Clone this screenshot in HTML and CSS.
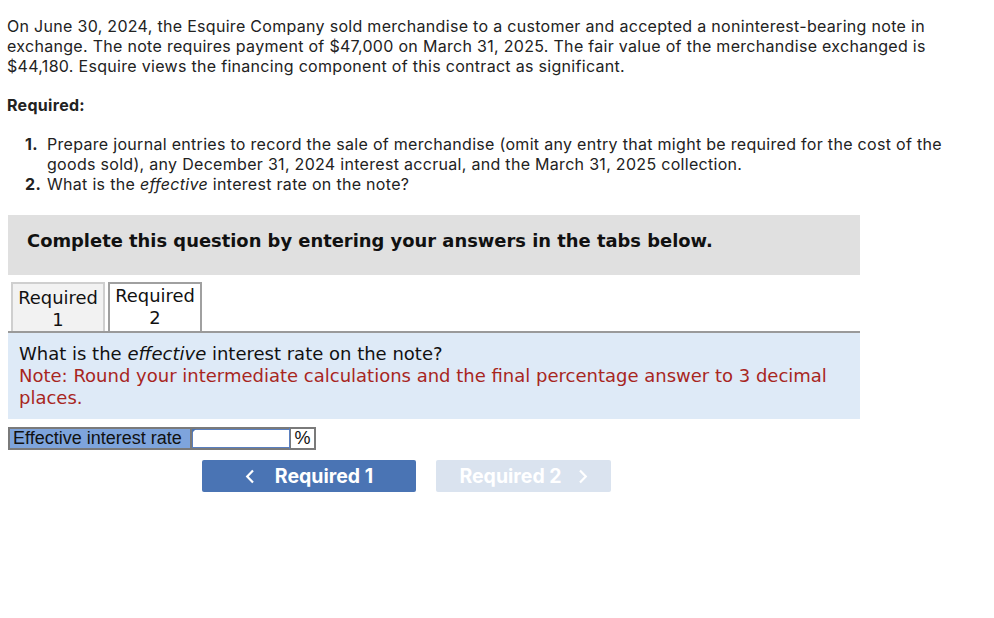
FILE: index.html
```html
<!DOCTYPE html>
<html>
<head>
<meta charset="utf-8">
<link rel="stylesheet" href="styles.css">
</head>
<body>
<div class="page">
  <p class="intro">On June 30, 2024, the Esquire Company sold merchandise to a customer and accepted a noninterest-bearing note in exchange. The note requires payment of $47,000 on March 31, 2025. The fair value of the merchandise exchanged is $44,180. Esquire views the financing component of this contract as significant.</p>
  <p class="req-title">Required:</p>
  <ol class="req-list">
    <li><span class="num">1.</span><span>Prepare journal entries to record the sale of merchandise (omit any entry that might be required for the cost of the goods sold), any December 31, 2024 interest accrual, and the March 31, 2025 collection.</span></li>
    <li><span class="num">2.</span><span>What is the <em>effective</em> interest rate on the note?</span></li>
  </ol>

  <div class="instructions">Complete this question by entering your answers in the tabs below.</div>

  <div class="tabs">
    <div class="tab tab-inactive">Required<br>1</div>
    <div class="tab tab-active">Required<br>2</div>
  </div>

  <div class="panel">
    <div class="question">What is the <em>effective</em> interest rate on the note?</div>
    <div class="note">Note: Round your intermediate calculations and the final percentage answer to 3 decimal places.</div>
  </div>

  <div class="answer-row">
    <div class="answer-label">Effective interest rate</div>
    <div class="answer-input"><span class="corner"></span></div>
    <div class="answer-unit">%</div>
  </div>

  <div class="nav">
    <div class="btn btn-prev">
      <svg class="chev" width="10" height="15" viewBox="0 0 10 15"><path d="M8 1.5 L2.2 7.5 L8 13.5" fill="none" stroke="#fff" stroke-width="2.2"/></svg>
      <span>Required 1</span>
    </div>
    <div class="btn btn-next">
      <span>Required 2</span>
      <svg class="chev" width="10" height="15" viewBox="0 0 10 15"><path d="M2 1.5 L7.8 7.5 L2 13.5" fill="none" stroke="#fff" stroke-width="2.2"/></svg>
    </div>
  </div>
</div>
</body>
</html>
```

FILE: styles.css
```css
* { box-sizing: border-box; }
body {
  margin: 0;
  background: #fff;
}
.page {
  padding: 16px 0 0 7px;
  width: 980px;
  font-family: "Inter", "Lato", sans-serif;
  font-size: 16px;
  letter-spacing: 0.3px;
  color: #222;
}
.intro {
  margin: 0;
  line-height: 20px;
  width: 955px;
}
.req-title {
  margin: 19px 0 0 0;
  font-weight: bold;
  line-height: 20px;
}
.req-list {
  list-style: none;
  margin: 19px 0 0 0;
  padding: 0 0 0 18px;
  line-height: 20px;
  width: 960px;
}
.req-list li {
  display: flex;
}
.req-list .num {
  font-weight: bold;
  width: 22px;
  flex: none;
}
.instructions {
  margin: 21px 0 0 1px;
  width: 852px;
  height: 60px;
  background: #e0e0e0;
  font-family: "DejaVu Sans", Verdana, sans-serif;
  font-weight: bold;
  font-size: 17.9px;
  letter-spacing: 0;
  color: #111;
  padding: 15px 0 0 19px;
}
.tabs {
  display: flex;
  gap: 3px;
  margin: 7px 0 0 4px;
  align-items: flex-end;
}
.tab {
  font-family: "DejaVu Sans", Verdana, sans-serif;
  font-size: 17.9px;
  letter-spacing: 0;
  line-height: 22px;
  text-align: center;
  color: #111;
  width: 94px;
  height: 49px;
}
.tab-inactive {
  background: #f2f2f2;
  border: 2px solid #cfcfcf;
  border-bottom: none;
  padding-top: 3px;
}
.tab-active {
  background: #fff;
  border: 2px solid #a0a0a0;
  border-bottom: none;
  padding-top: 1px;
}
.panel {
  margin-left: 1px;
  width: 852px;
  border-top: 2px solid #9a9a9a;
  background: #deeaf7;
  padding: 10px 10px 10px 11px;
  font-family: "DejaVu Sans", Verdana, sans-serif;
  font-size: 18px;
  letter-spacing: 0;
  line-height: 22px;
  color: #111;
}
.note {
  color: #a8261e;
}
.answer-row {
  display: flex;
  margin: 8px 0 0 1px;
  height: 23px;
  font-family: "Liberation Sans", Arial, sans-serif;
  font-size: 18px;
  letter-spacing: 0;
}
.answer-label {
  background: #7ea4dc;
  border: 2px solid #7a7a7a;
  border-right: none;
  padding: 0 0 0 3px;
  width: 182px;
  line-height: 19px;
  color: #111;
}
.answer-input {
  position: relative;
  width: 100px;
  background: #fff;
  border: 1px solid #5a7fbf;
  border-top: 2px solid #7a7a7a;
  border-bottom: 2px solid #7a7a7a;
  border-left: 2px solid #7a7a7a;
  box-shadow: inset 0 1px 0 #5a7fbf, inset 0 -1px 0 #5a7fbf, inset 1px 0 0 #5a7fbf;
}
.corner {
  position: absolute;
  left: 0;
  top: 0;
  width: 0;
  height: 0;
  border-top: 4px solid #4a74b4;
  border-right: 4px solid transparent;
}
.answer-unit {
  width: 26px;
  border: 2px solid #7a7a7a;
  border-left: 1px solid #7a7a7a;
  text-align: center;
  line-height: 19px;
  color: #111;
  background: #fff;
}
.nav {
  display: flex;
  gap: 20px;
  margin: 10px 0 0 195px;
}
.btn {
  height: 32px;
  border-radius: 2px;
  font-family: "Inter", "Roboto", sans-serif;
  font-weight: bold;
  font-size: 19.5px;
  letter-spacing: 0;
  color: #fff;
  display: flex;
  align-items: center;
  justify-content: center;
}
.btn-prev {
  width: 214px;
  background: #4a74b4;
}
.btn-next {
  width: 175px;
  background: #dae3ef;
}
.btn-prev .chev { margin-right: 20px; }
.btn-next .chev { margin-left: 16px; }
```
